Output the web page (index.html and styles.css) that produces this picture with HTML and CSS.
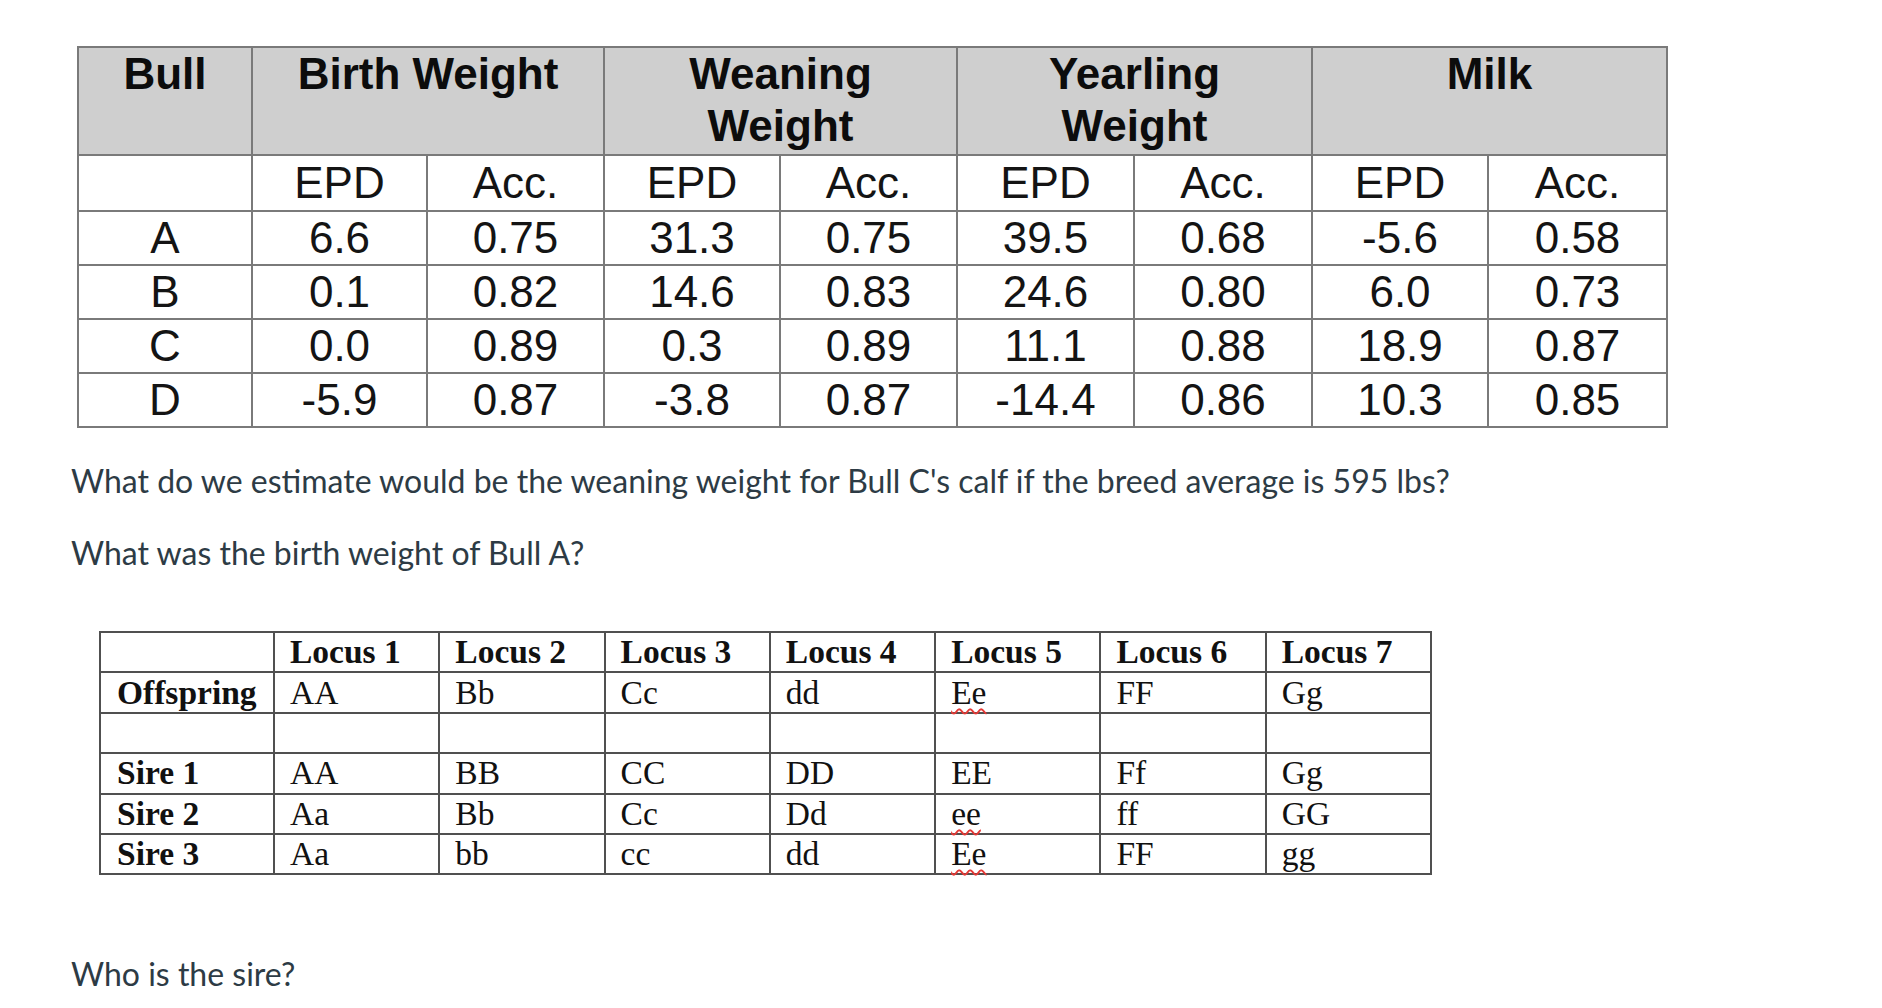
FILE: index.html
```html
<!DOCTYPE html>
<html>
<head>
<meta charset="utf-8">
<link rel="stylesheet" href="styles.css">
</head>
<body>
<div class="page">
  <table class="epd">
    <colgroup>
      <col class="c1"><col class="c2"><col class="c3"><col class="c4"><col class="c5"><col class="c6"><col class="c7"><col class="c8"><col class="c9">
    </colgroup>
    <tr class="head">
      <th>Bull</th>
      <th colspan="2">Birth Weight</th>
      <th colspan="2">Weaning<br>Weight</th>
      <th colspan="2">Yearling<br>Weight</th>
      <th colspan="2">Milk</th>
    </tr>
    <tr class="sub">
      <td></td><td>EPD</td><td>Acc.</td><td>EPD</td><td>Acc.</td><td>EPD</td><td>Acc.</td><td>EPD</td><td>Acc.</td>
    </tr>
    <tr class="row"><td>A</td><td>6.6</td><td>0.75</td><td>31.3</td><td>0.75</td><td>39.5</td><td>0.68</td><td>-5.6</td><td>0.58</td></tr>
    <tr class="row"><td>B</td><td>0.1</td><td>0.82</td><td>14.6</td><td>0.83</td><td>24.6</td><td>0.80</td><td>6.0</td><td>0.73</td></tr>
    <tr class="row"><td>C</td><td>0.0</td><td>0.89</td><td>0.3</td><td>0.89</td><td>11.1</td><td>0.88</td><td>18.9</td><td>0.87</td></tr>
    <tr class="row"><td>D</td><td>-5.9</td><td>0.87</td><td>-3.8</td><td>0.87</td><td>-14.4</td><td>0.86</td><td>10.3</td><td>0.85</td></tr>
  </table>

  <p class="q q1">What do we estimate would be the weaning weight for Bull C's calf if the breed average is 595 lbs?</p>
  <p class="q q2">What was the birth weight of Bull A?</p>

  <table class="loci">
    <colgroup>
      <col class="first"><col><col><col><col><col><col><col>
    </colgroup>
    <tr>
      <th></th><th>Locus 1</th><th>Locus 2</th><th>Locus 3</th><th>Locus 4</th><th>Locus 5</th><th>Locus 6</th><th>Locus 7</th>
    </tr>
    <tr>
      <th>Offspring</th><td>AA</td><td>Bb</td><td>Cc</td><td>dd</td><td><span class="spell">Ee</span></td><td>FF</td><td>Gg</td>
    </tr>
    <tr>
      <th></th><td></td><td></td><td></td><td></td><td></td><td></td><td></td>
    </tr>
    <tr>
      <th>Sire 1</th><td>AA</td><td>BB</td><td>CC</td><td>DD</td><td>EE</td><td>Ff</td><td>Gg</td>
    </tr>
    <tr>
      <th>Sire 2</th><td>Aa</td><td>Bb</td><td>Cc</td><td>Dd</td><td><span class="spell">ee</span></td><td>ff</td><td>GG</td>
    </tr>
    <tr>
      <th>Sire 3</th><td>Aa</td><td>bb</td><td>cc</td><td>dd</td><td><span class="spell">Ee</span></td><td>FF</td><td>gg</td>
    </tr>
  </table>

  <p class="q q3">Who is the sire?</p>
</div>
</body>
</html>
```

FILE: styles.css
```css
html, body {
  margin: 0;
  padding: 0;
  background: #ffffff;
}

.page {
  padding: 46px 0 0 71px;
}

/* EPD table */
.epd {
  border-collapse: collapse;
  table-layout: fixed;
  width: 1591px;
  margin-left: 6px;
  font-family: "Liberation Sans", Arial, sans-serif;
  color: #141414;
}

.epd col.c1 { width: 174px; }
.epd col.c2 { width: 175px; }
.epd col.c3 { width: 177px; }
.epd col.c4 { width: 176px; }
.epd col.c5 { width: 177px; }
.epd col.c6 { width: 177px; }
.epd col.c7 { width: 178px; }
.epd col.c8 { width: 176px; }
.epd col.c9 { width: 179px; }

.epd th,
.epd td {
  border: 2px solid #7a7a7a;
  text-align: center;
  padding: 0;
  font-size: 44px;
}

.epd .head th {
  background: #cfcfcf;
  font-weight: bold;
  height: 106px;
  vertical-align: top;
  line-height: 52px;
  padding-top: 0;
  color: #0c0c0c;
}

.epd .sub td {
  height: 54px;
  line-height: 44px;
  vertical-align: middle;
}

.epd .row td {
  height: 52px;
  line-height: 44px;
  vertical-align: middle;
}

/* Questions */
.q {
  font-family: Lato, "Open Sans", sans-serif;
  font-size: 32px;
  line-height: 43px;
  color: #2d3b45;
  margin: 0;
}

.q1 {
  margin-top: 31px;
}

.q2 {
  margin-top: 29px;
}

.q3 {
  margin-top: 77px;
}

/* Loci table */
.loci {
  border-collapse: collapse;
  table-layout: fixed;
  width: 1333px;
  margin-top: 57px;
  margin-left: 28px;
  font-family: "Liberation Serif", "Times New Roman", serif;
  font-size: 33.5px;
  color: #111111;
}

.loci col.first {
  width: 174px;
}

.loci th,
.loci td {
  border: 2px solid #505050;
  height: 38.4px;
  padding: 0 0 0 15px;
  text-align: left;
  vertical-align: middle;
  line-height: 36px;
  white-space: nowrap;
}

.loci th {
  font-weight: bold;
}

.loci td {
  font-weight: normal;
}

.loci tr th:first-child {
  padding-left: 16px;
}

.spell {
  text-decoration: underline wavy #e53935;
  text-decoration-thickness: 1.5px;
  text-underline-offset: 4px;
}
```
